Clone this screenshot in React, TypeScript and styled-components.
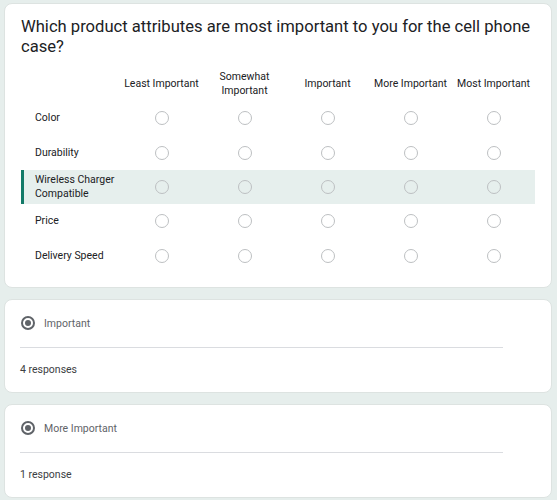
import React from "react";
import styled, { createGlobalStyle } from "styled-components";

const GlobalStyle = createGlobalStyle`
  body {
    margin: 0;
    background: #e6eeec;
    font-family: Roboto, "Liberation Sans", Arial, sans-serif;
    color: #202124;
  }
`;

const columns = [
  "Least Important",
  "Somewhat Important",
  "Important",
  "More Important",
  "Most Important",
];

const rows = [
  { label: "Color" },
  { label: "Durability" },
  { label: "Wireless Charger Compatible", active: true },
  { label: "Price" },
  { label: "Delivery Speed" },
];

const summaries = [
  { choice: "Important", count: "4 responses" },
  { choice: "More Important", count: "1 response" },
];

const Page = styled.div`
  display: flex;
  flex-direction: column;
  gap: 11px;
  padding: 3px 5px 0 4px;
`;

const Card = styled.div`
  background: #fff;
  border: 1px solid #dde3e1;
  border-radius: 8px;
`;

const QuestionCard = styled(Card)`
  padding: 13px 16px 14px;
`;

const Title = styled.div`
  font-size: 16.6px;
  line-height: 20px;
  color: #202124;
  margin-bottom: 10px;
`;

const Grid = styled.div`
  display: grid;
  grid-template-columns: 99px repeat(5, 83px);
  grid-auto-rows: 34.3px;
`;

const Row = styled.div<{ $active?: boolean }>`
  display: contents;
  & > * {
    background: ${(p) => (p.$active ? "#e6efed" : "transparent")};
  }
`;

const HeadCell = styled.div`
  display: flex;
  align-items: center;
  justify-content: center;
  text-align: center;
  font-size: 10.5px;
  line-height: 14px;
  color: #202124;
`;

const Label = styled.div<{ $active?: boolean }>`
  display: flex;
  align-items: center;
  box-sizing: border-box;
  padding-left: ${(p) => (p.$active ? "11px" : "14px")};
  border-left: ${(p) => (p.$active ? "3px solid #137a68" : "none")};
  font-size: 10.5px;
  line-height: 14px;
  color: #202124;
`;

const Cell = styled.div`
  display: flex;
  align-items: center;
  justify-content: center;
`;

const Radio = styled.span`
  width: 14px;
  height: 14px;
  box-sizing: border-box;
  border: 1.5px solid #bdc0c2;
  border-radius: 50%;
`;

const SummaryCard = styled(Card)`
  padding: 0 48px 0 15px;
`;

const Choice = styled.div`
  height: 47px;
  display: flex;
  align-items: center;
  gap: 9px;
  border-bottom: 1px solid #dadce0;
  font-size: 10.5px;
  color: #5f6368;
`;

const CheckedRadio = styled.span`
  width: 14px;
  height: 14px;
  margin-left: 1px;
  box-sizing: border-box;
  border: 2px solid #5f6368;
  border-radius: 50%;
  display: flex;
  align-items: center;
  justify-content: center;
  &::after {
    content: "";
    width: 6px;
    height: 6px;
    border-radius: 50%;
    background: #5f6368;
  }
`;

const Count = styled.div`
  height: 44px;
  display: flex;
  align-items: center;
  font-size: 10.5px;
  color: #3c4043;
`;

export default function App() {
  return (
    <>
      <GlobalStyle />
      <Page>
        <QuestionCard>
          <Title>
            Which product attributes are most important to you for the cell
            phone case?
          </Title>
          <Grid>
            <HeadCell />
            {columns.map((c) => (
              <HeadCell key={c}>{c}</HeadCell>
            ))}
            {rows.map((r) => (
              <Row key={r.label} $active={r.active}>
                <Label $active={r.active}>{r.label}</Label>
                {columns.map((c) => (
                  <Cell key={c}>
                    <Radio />
                  </Cell>
                ))}
              </Row>
            ))}
          </Grid>
        </QuestionCard>
        {summaries.map((s) => (
          <SummaryCard key={s.choice}>
            <Choice>
              <CheckedRadio />
              {s.choice}
            </Choice>
            <Count>{s.count}</Count>
          </SummaryCard>
        ))}
      </Page>
    </>
  );
}
